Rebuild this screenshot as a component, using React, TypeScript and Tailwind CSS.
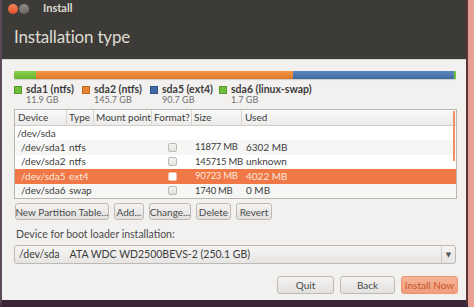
import React from "react";

const font = { fontFamily: 'Lato, "DejaVu Sans", sans-serif' };

function Btn({ children, w, primary }: { children: React.ReactNode; w: string; primary?: boolean }) {
  return (
    <div
      className={
        "flex items-center justify-center whitespace-nowrap rounded-[3px] border text-[10px] leading-none " +
        w +
        (primary
          ? " border-[#eb9474] bg-gradient-to-b from-[#f7b497] to-[#f09d7b] text-[#c4552a]"
          : " border-[#bdbab5] bg-gradient-to-b from-[#f4f3f2] to-[#e2e1df] text-[#4a4a4a]")
      }
    >
      {children}
    </div>
  );
}

const rows = [
  { dev: "/dev/sda", indent: false, type: "", fmt: false, size: "", used: "", bg: "bg-white" },
  { dev: "/dev/sda1", indent: true, type: "ntfs", fmt: true, size: "11877 MB", used: "6302 MB", bg: "bg-[#f6f6f5]" },
  { dev: "/dev/sda2", indent: true, type: "ntfs", fmt: true, size: "145715 MB", used: "unknown", bg: "bg-white" },
  { dev: "/dev/sda5", indent: true, type: "ext4", fmt: true, size: "90723 MB", used: "4022 MB", bg: "bg-[#f07746]", sel: true },
  { dev: "/dev/sda6", indent: true, type: "swap", fmt: true, size: "1740 MB", used: "0 MB", bg: "bg-[#f6f6f5]" },
];

export default function App() {
  return (
    <div className="flex h-[307px] w-[474px] overflow-hidden whitespace-nowrap bg-[#e9a092]" style={font}>
      <div className="flex h-[307px] w-[468px] flex-col border-b-[7px] border-l-[2px] border-r-[2px] border-b-[#3b2637] border-l-[#5d4a58] border-r-[#5a3636] bg-[#f2f1f0]">
        {/* Title bar */}
        <div className="flex h-[17px] items-center bg-[#3c3b37] pl-[6px]">
          <div className="h-[10px] w-[10px] rounded-full bg-gradient-to-b from-[#f6835a] to-[#e0502a]" />
          <div className="ml-[1px] h-[10px] w-[10px] rounded-full bg-gradient-to-b from-[#8e8b85] to-[#6a6862]" />
          <div className="ml-[14px] text-[11px] font-bold text-[#dfdbd2]">Install</div>
        </div>
        {/* Header */}
        <div className="flex h-[42px] items-center bg-[#3c3b37] pl-[12px] pb-[2px]">
          <div className="text-[17px] tracking-[-0.2px] text-[#dfdbd2]">Installation type</div>
        </div>
        <div className="h-[1px] bg-[#d8d6d2]" />
        {/* Content */}
        <div className="flex flex-1 flex-col px-[12px]">
          {/* bar */}
          <div className="mt-[11px] flex h-[8px] w-[442px] overflow-hidden rounded-[1px] shadow-[0_1px_1px_rgba(0,0,0,0.15)]">
            <div className="w-[22px] bg-gradient-to-b from-[#8ad04e] to-[#66b22e]" />
            <div className="w-[257px] bg-gradient-to-b from-[#f39646] to-[#e07828]" />
            <div className="w-[161px] bg-gradient-to-b from-[#5b88c2] to-[#41699f]" />
            <div className="w-[2px] bg-[#6cc03a]" />
          </div>
          {/* legend */}
          <div className="mt-[5px] flex h-[20px]">
            {[
              ["sda1 (ntfs)", "11.9 GB", "bg-[#6fbf3a]", "w-[68px]"],
              ["sda2 (ntfs)", "145.7 GB", "bg-[#ea842f]", "w-[68px]"],
              ["sda5 (ext4)", "90.7 GB", "bg-[#3e6aa6]", "w-[69px]"],
              ["sda6 (linux-swap)", "1.7 GB", "bg-[#6fbf3a]", "w-[120px]"],
            ].map(([n, s, c, w]) => (
              <div key={n} className={"flex " + w}>
                <div className={"mt-[2px] h-[8px] w-[8px] border border-black/20 " + c} />
                <div className="ml-[4px] flex flex-col">
                  <div className="text-[10.5px] font-bold leading-[11px] text-[#3c3c3c]">{n}</div>
                  <div className="text-[9px] leading-[10px] text-[#6e6e6e]">{s}</div>
                </div>
              </div>
            ))}
          </div>
          {/* table */}
          <div className="relative mt-[5px] flex h-[90px] w-[443px] flex-col border border-[#bab7b2] bg-white">
            <div className="flex h-[16px] border-b border-[#d0cdc9] bg-gradient-to-b from-[#fafafa] to-[#ecebea] text-[10px] text-[#3c3c3c]">
              <div className="flex w-[52px] items-center border-r border-[#d6d3cf] pl-[3px]">Device</div>
              <div className="flex w-[27px] items-center border-r border-[#d6d3cf] pl-[2px]">Type</div>
              <div className="flex w-[58px] items-center border-r border-[#d6d3cf] pl-[2px]">Mount point</div>
              <div className="flex w-[40px] items-center border-r border-[#d6d3cf] pl-[2px]">Format?</div>
              <div className="flex w-[50px] items-center border-r border-[#d6d3cf] pl-[2px]">Size</div>
              <div className="flex flex-1 items-center pl-[3px]">Used</div>
            </div>
            {rows.map((r) => (
              <div
                key={r.dev}
                className={"flex h-[14.4px] items-center text-[10px] " + r.bg + (r.sel ? " text-[#fde7dc]" : " text-[#3c3c3c]")}
              >
                <div className={"w-[52px] " + (r.indent ? "pl-[6px]" : "pl-[2px]")}>{r.dev}</div>
                <div className="w-[27px] pl-[2px]">{r.type}</div>
                <div className="w-[58px]" />
                <div className="flex w-[40px] justify-center">
                  {r.fmt && (
                    <div
                      className={
                        "h-[9px] w-[9px] rounded-[2px] border " +
                        (r.sel ? "border-[#f3c5b0] bg-white" : "border-[#bdbab6] bg-gradient-to-b from-[#f4f4f3] to-[#e2e1df]")
                      }
                    />
                  )}
                </div>
                <div className="w-[50px] pl-[3px] text-[9.5px] tracking-[-0.3px]">{r.size}</div>
                <div className="flex-1 pl-[4px]">{r.used}</div>
              </div>
            ))}
            <div className="absolute right-[1px] top-[1px] h-[50px] w-[2px] bg-[#f0925f]" />
          </div>
          {/* buttons */}
          <div className="mt-[4px] flex h-[17px] gap-[5px] pl-[1px]">
            <Btn w="w-[94px]">New Partition Table...</Btn>
            <Btn w="w-[30px]">Add...</Btn>
            <Btn w="w-[42px]">Change...</Btn>
            <Btn w="w-[35px]">Delete</Btn>
            <Btn w="w-[36px]">Revert</Btn>
          </div>
          <div className="mt-[7px] pl-[2px] text-[10.5px] leading-[14px] text-[#4a4a4a]">Device for boot loader installation:</div>
          <div className="mt-[4px] flex h-[19px] w-[442px] items-center rounded-[3px] border border-[#bdbab5] bg-gradient-to-b from-[#f6f5f4] to-[#e6e5e3] pl-[4px] text-[10.5px] text-[#3c3c3c]">
            <div className="flex-1">
              /dev/sda<span className="ml-[10px]">ATA WDC WD2500BEVS-2 (250.1 GB)</span>
            </div>
            <div className="flex h-full w-[14px] items-center justify-center border-l border-[#cfccc8] text-[7px] text-[#555]">▼</div>
          </div>
          <div className="mt-[12px] flex h-[18px] w-[444px] justify-end gap-[6px]">
            <Btn w="w-[57px]">Quit</Btn>
            <Btn w="w-[55px]">Back</Btn>
            <Btn w="w-[57px]" primary>
              Install Now
            </Btn>
          </div>
        </div>
      </div>
    </div>
  );
}
